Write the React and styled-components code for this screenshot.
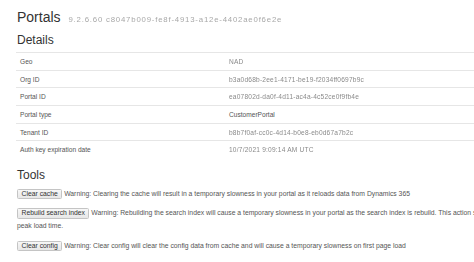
import React from "react";
import styled, { createGlobalStyle } from "styled-components";

const GlobalStyle = createGlobalStyle`
  body {
    margin: 0;
    background: #fff;
    color: #333;
    font-family: "Liberation Sans", Arial, sans-serif;
    overflow: hidden;
  }
`;

const Page = styled.div`
  width: 640px;
  padding: 0 0 0 16px;
`;

const Title = styled.h1`
  margin: 9.5px 0 0 1px;
  font-size: 14px;
  font-weight: normal;
  line-height: 1.1;
  color: #333;
  white-space: nowrap;
`;

const Version = styled.small`
  margin-left: 4px;
  font-size: 7.8px;
  letter-spacing: 0.8px;
  color: #a8a8a8;
  filter: blur(0.6px);
`;

const Section = styled.h3`
  margin: ${(p) => p.$top}px 0 ${(p) => p.$bottom}px 1px;
  font-size: 12px;
  font-weight: normal;
  line-height: 1.1;
  color: #333;
`;

const Table = styled.table`
  width: 100%;
  border-collapse: collapse;
  font-size: 6.6px;
  color: #555;
`;

const Row = styled.tr`
  height: 17.66px;
  border-top: 1px solid #e6e6e6;
`;

const Cell = styled.td`
  padding: 0 4px;
  vertical-align: middle;
  width: ${(p) => (p.$label ? "201px" : "auto")};
`;

const Value = styled.span`
  color: ${(p) => (p.$hidden ? "#8a8a8a" : "#555")};
  filter: ${(p) => (p.$hidden ? "blur(0.7px)" : "none")};
  letter-spacing: ${(p) => (p.$hidden ? "0.2px" : "0")};
`;

const Tool = styled.p`
  margin: 0 0 6.5px 1px;
  font-size: 6.8px;
  line-height: 13px;
  color: #555;
`;

const Button = styled.button`
  display: inline-block;
  height: 10.5px;
  padding: 0 3.5px;
  margin: 0;
  font-family: inherit;
  font-size: 6.8px;
  line-height: 8.5px;
  color: #333;
  background: linear-gradient(#f7f7f7, #e7e7e7);
  border: 1px solid #c4c4c4;
  border-radius: 1.5px;
  vertical-align: middle;
`;

const details = [
  { label: "Geo", value: "NAD", hidden: true },
  { label: "Org ID", value: "b3a0d68b-2ee1-4171-be19-f2034ff0697b9c", hidden: true },
  { label: "Portal ID", value: "ea07802d-da0f-4d11-ac4a-4c52ce0f9fb4e", hidden: true },
  { label: "Portal type", value: "CustomerPortal" },
  { label: "Tenant ID", value: "b8b7f0af-cc0c-4d14-b0e8-eb0d67a7b2c", hidden: true },
  { label: "Auth key expiration date", value: "10/7/2021 9:09:14 AM UTC", hidden: true },
];

function App() {
  return (
    <Page>
      <GlobalStyle />
      <Title>
        Portals <Version>9.2.6.60 c8047b009-fe8f-4913-a12e-4402ae0f6e2e</Version>
      </Title>
      <Section $top={9} $bottom={5}>Details</Section>
      <Table>
        <tbody>
          {details.map((d) => (
            <Row key={d.label}>
              <Cell $label>{d.label}</Cell>
              <Cell>
                <Value $hidden={d.hidden}>{d.value}</Value>
              </Cell>
            </Row>
          ))}
        </tbody>
      </Table>
      <Section $top={10} $bottom={5}>Tools</Section>
      <Tool>
        <Button>Clear cache</Button> Warning: Clearing the cache will result in a temporary slowness in your
        portal as it reloads data from Dynamics 365
      </Tool>
      <Tool>
        <Button>Rebuild search index</Button> Warning: Rebuilding the search index will cause a temporary
        slowness in your portal as the search index is rebuild. This action should be done during non-
        <br />
        peak load time.
      </Tool>
      <Tool>
        <Button>Clear config</Button> Warning: Clear config will clear the config data from cache and will
        cause a temporary slowness on first page load
      </Tool>
    </Page>
  );
}

export default App;
